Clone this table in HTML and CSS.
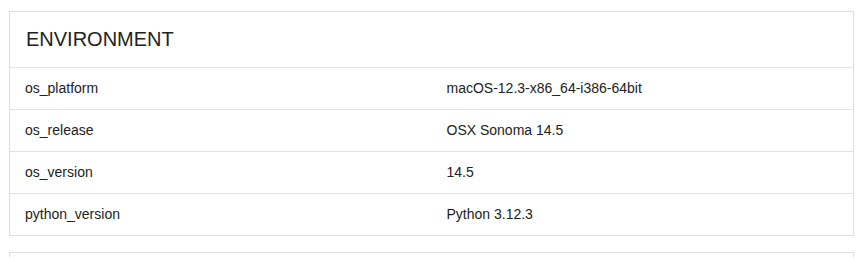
FILE: index.html
```html
<!DOCTYPE html>
<html>
<head>
<meta charset="utf-8">
<link rel="stylesheet" href="styles.css">
</head>
<body>
<div class="page">
  <section class="panel">
    <h2 class="panel-title">ENVIRONMENT</h2>
    <table class="kv">
      <tbody>
        <tr><td>os_platform</td><td>macOS-12.3-x86_64-i386-64bit</td></tr>
        <tr><td>os_release</td><td>OSX Sonoma 14.5</td></tr>
        <tr><td>os_version</td><td>14.5</td></tr>
        <tr><td>python_version</td><td>Python 3.12.3</td></tr>
      </tbody>
    </table>
  </section>
  <section class="panel panel-next"></section>
</div>
</body>
</html>
```

FILE: styles.css
```css
html, body {
  margin: 0;
  padding: 0;
  background: #fff;
}
body {
  font-family: "Liberation Sans", Arial, sans-serif;
  color: #222;
}
.page {
  padding: 11px 5px 0 9px;
  display: flex;
  flex-direction: column;
  gap: 16px;
}
.panel {
  border: 1px solid #dedede;
  background: #fff;
}
.panel-next {
  height: 4px;
  border-bottom: none;
}
.panel-title {
  margin: 0;
  padding: 15px 16px;
  font-size: 20px;
  line-height: 25px;
  font-weight: normal;
  color: #222;
}
.kv {
  width: 100%;
  border-collapse: collapse;
  table-layout: fixed;
}
.kv td {
  width: 50%;
  border-top: 1px solid #e3e3e3;
  padding: 12px 15px;
  font-size: 14px;
  line-height: 17px;
  color: #222;
}
```
